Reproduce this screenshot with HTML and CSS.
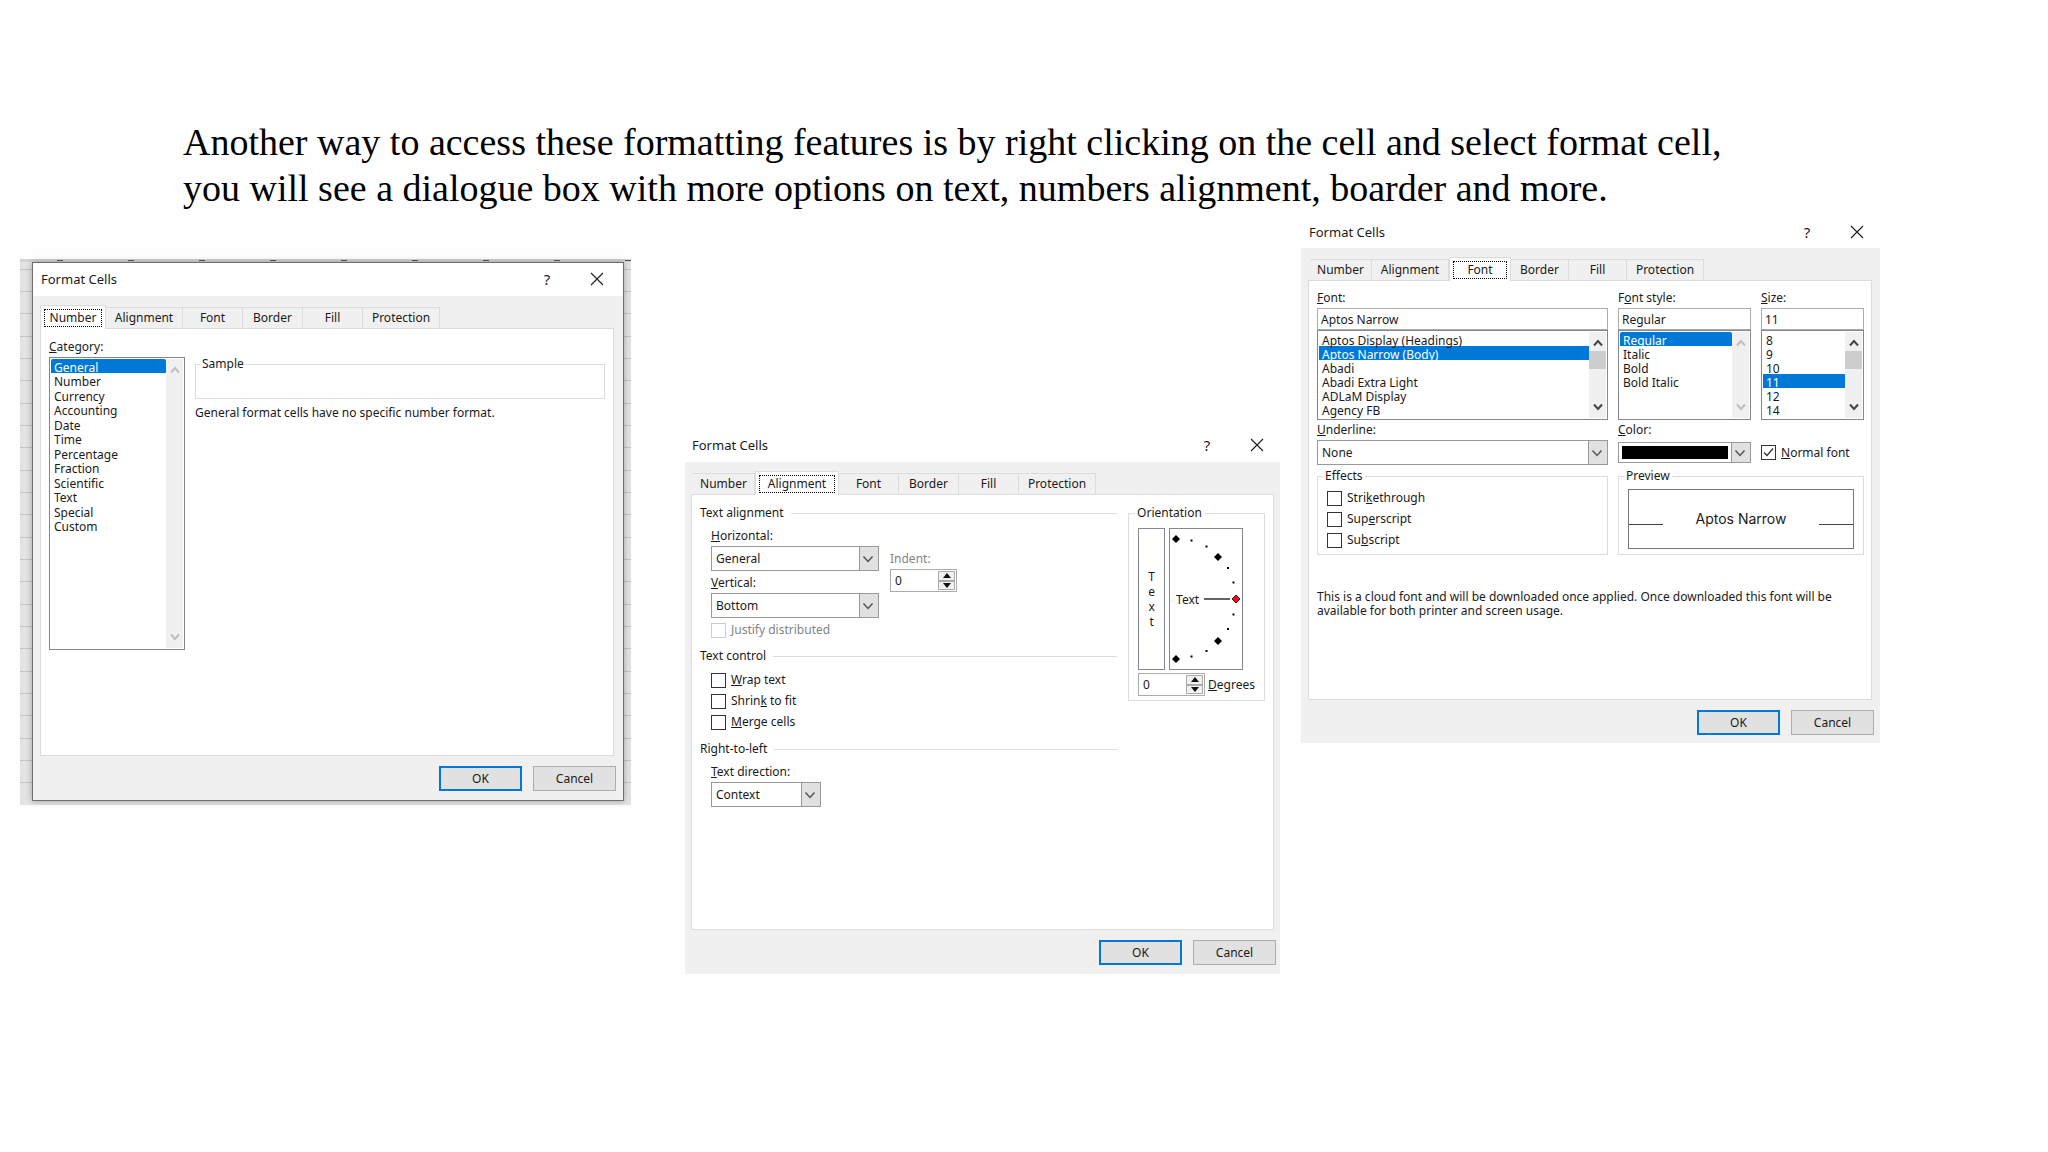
FILE: index.html
```html
<!DOCTYPE html>
<html lang="en">
<head>
    <meta charset="UTF-8">
    <meta name="viewport" content="width=device-width, initial-scale=1.0">
    <title>Format Cells</title>
    <link rel="stylesheet" href="styles.css">
</head>
<body>
    <!-- Shared icons -->
    <svg class="sprite" width="0" height="0" aria-hidden="true">
        <symbol id="close" viewBox="0 0 14 14"><path d="M1 1l12 12M13 1L1 13" fill="none" stroke="#222" stroke-width="1.2"/></symbol>
        <symbol id="down" viewBox="0 0 12 12"><path d="M1.5 3.5L6 8.5l4.5-5" fill="none" stroke="currentColor" stroke-width="1.5"/></symbol>
        <symbol id="arrow-up" viewBox="0 0 10 10"><path d="M1 7.5L5 3l4 4.5" fill="none" stroke="currentColor" stroke-width="2"/></symbol>
        <symbol id="arrow-down" viewBox="0 0 10 10"><path d="M1 2.5L5 7l4-4.5" fill="none" stroke="currentColor" stroke-width="2"/></symbol>
        <symbol id="spin-up" viewBox="0 0 8 5"><path d="M0 5l4-5 4 5z" fill="#111"/></symbol>
        <symbol id="spin-down" viewBox="0 0 8 5"><path d="M0 0h8L4 5z" fill="#111"/></symbol>
    </svg>

    <p class="intro">Another way to access these formatting features is by right clicking on the cell and select format cell,<br>you will see a dialogue box with more options on text, numbers alignment, boarder and more.</p>

    <main class="dialogs">
        <!-- Number tab -->
        <div class="sheet">
            <div class="columns"></div>
            <section class="dialog framed">
                <header class="titlebar">
                    <h2>Format Cells</h2>
                    <button type="button" class="icon-btn help">?</button>
                    <button type="button" class="icon-btn" aria-label="Close"><svg width="14" height="14"><use href="#close"/></svg></button>
                </header>
                <div class="dialog-body">
                    <nav class="tabs">
                        <button type="button" class="tab active"><span>Number</span></button>
                        <button type="button" class="tab wide">Alignment</button>
                        <button type="button" class="tab">Font</button>
                        <button type="button" class="tab">Border</button>
                        <button type="button" class="tab">Fill</button>
                        <button type="button" class="tab wide">Protection</button>
                    </nav>
                    <div class="panel number-panel">
                        <div class="category">
                            <label for="category"><u>C</u>ategory:</label>
                            <div class="listbox">
                                <select id="category" size="12">
                                    <option selected>General</option>
                                    <option>Number</option>
                                    <option>Currency</option>
                                    <option>Accounting</option>
                                    <option>Date</option>
                                    <option>Time</option>
                                    <option>Percentage</option>
                                    <option>Fraction</option>
                                    <option>Scientific</option>
                                    <option>Text</option>
                                    <option>Special</option>
                                    <option>Custom</option>
                                </select>
                                <div class="scroll off">
                                    <svg width="10" height="10"><use href="#arrow-up"/></svg>
                                    <svg width="10" height="10"><use href="#arrow-down"/></svg>
                                </div>
                            </div>
                        </div>
                        <div class="sample">
                            <fieldset class="group sample-box">
                                <legend>Sample</legend>
                            </fieldset>
                            <p>General format cells have no specific number format.</p>
                        </div>
                    </div>
                    <footer class="actions">
                        <button type="button" class="btn primary">OK</button>
                        <button type="button" class="btn">Cancel</button>
                    </footer>
                </div>
            </section>
        </div>

        <!-- Alignment tab -->
        <section class="dialog alignment-dialog">
            <header class="titlebar">
                <h2>Format Cells</h2>
                <button type="button" class="icon-btn help">?</button>
                <button type="button" class="icon-btn" aria-label="Close"><svg width="14" height="14"><use href="#close"/></svg></button>
            </header>
            <div class="dialog-body">
                <nav class="tabs">
                    <button type="button" class="tab">Number</button>
                    <button type="button" class="tab wide active"><span>Alignment</span></button>
                    <button type="button" class="tab">Font</button>
                    <button type="button" class="tab">Border</button>
                    <button type="button" class="tab">Fill</button>
                    <button type="button" class="tab wide">Protection</button>
                </nav>
                <div class="panel alignment-panel">
                    <div class="settings">
                        <h3>Text alignment</h3>
                        <div class="align-row">
                            <div class="field-stack">
                                <label for="horizontal"><u>H</u>orizontal:</label>
                                <div class="combo">
                                    <select id="horizontal"><option>General</option></select>
                                    <svg width="12" height="12"><use href="#down"/></svg>
                                </div>
                                <label for="vertical"><u>V</u>ertical:</label>
                                <div class="combo">
                                    <select id="vertical"><option>Bottom</option></select>
                                    <svg width="12" height="12"><use href="#down"/></svg>
                                </div>
                            </div>
                            <div class="indent">
                                <label for="indent">Indent:</label>
                                <div class="spin">
                                    <input type="text" id="indent" value="0">
                                    <div class="spin-btns">
                                        <button type="button" aria-label="Increase indent"><svg width="8" height="5"><use href="#spin-up"/></svg></button>
                                        <button type="button" aria-label="Decrease indent"><svg width="8" height="5"><use href="#spin-down"/></svg></button>
                                    </div>
                                </div>
                            </div>
                        </div>
                        <label class="check disabled"><input type="checkbox" disabled>Justify distributed</label>
                        <h3>Text control</h3>
                        <div class="checks">
                            <label class="check"><input type="checkbox"><span><u>W</u>rap text</span></label>
                            <label class="check"><input type="checkbox"><span>Shrin<u>k</u> to fit</span></label>
                            <label class="check"><input type="checkbox"><span><u>M</u>erge cells</span></label>
                        </div>
                        <h3>Right-to-left</h3>
                        <div class="field-stack">
                            <label for="direction"><u>T</u>ext direction:</label>
                            <div class="combo short">
                                <select id="direction"><option>Context</option></select>
                                <svg width="12" height="12"><use href="#down"/></svg>
                            </div>
                        </div>
                    </div>
                    <fieldset class="group orientation">
                        <legend>Orientation</legend>
                        <div class="dials">
                            <button type="button" class="vertical-text"><span>T</span><span>e</span><span>x</span><span>t</span></button>
                            <div class="dial">
                                <span>Text</span>
                                <svg viewBox="0 0 72 140" width="72" height="140">
                                    <path d="M34 70h26" stroke="#111" stroke-width="1.3"/>
                                    <path d="M6 6l4 4-4 4-4-4zM48 24l4 4-4 4-4-4zM48 108l4 4-4 4-4-4zM6 126l4 4-4 4-4-4z" fill="#000"/>
                                    <path d="M66 66l4 4-4 4-4-4z" fill="#e81123" stroke="#600"/>
                                    <path d="M20.500 10.500h2v2h-2zM35.500 16.500h2v2h-2zM57 38h2v2h-2zM62.500 52.500h2v2h-2zM62.500 84.500h2v2h-2zM57 99h2v2h-2zM35.500 121h2v2h-2zM20.500 126.500h2v2h-2z" fill="#000"/>
                                </svg>
                            </div>
                        </div>
                        <div class="degrees">
                            <div class="spin">
                                <input type="text" id="degrees" value="0">
                                <div class="spin-btns">
                                    <button type="button" aria-label="Increase degrees"><svg width="8" height="5"><use href="#spin-up"/></svg></button>
                                    <button type="button" aria-label="Decrease degrees"><svg width="8" height="5"><use href="#spin-down"/></svg></button>
                                </div>
                            </div>
                            <label for="degrees"><u>D</u>egrees</label>
                        </div>
                    </fieldset>
                </div>
                <footer class="actions">
                    <button type="button" class="btn primary">OK</button>
                    <button type="button" class="btn">Cancel</button>
                </footer>
            </div>
        </section>

        <!-- Font tab -->
        <section class="dialog font-dialog">
            <header class="titlebar">
                <h2>Format Cells</h2>
                <button type="button" class="icon-btn help">?</button>
                <button type="button" class="icon-btn" aria-label="Close"><svg width="14" height="14"><use href="#close"/></svg></button>
            </header>
            <div class="dialog-body">
                <nav class="tabs">
                    <button type="button" class="tab">Number</button>
                    <button type="button" class="tab wide">Alignment</button>
                    <button type="button" class="tab active"><span>Font</span></button>
                    <button type="button" class="tab">Border</button>
                    <button type="button" class="tab">Fill</button>
                    <button type="button" class="tab wide">Protection</button>
                </nav>
                <div class="panel font-panel">
                    <div class="picker">
                        <label for="font"><u>F</u>ont:</label>
                        <input type="text" id="font" value="Aptos Narrow">
                        <div class="listbox">
                            <select size="6" aria-label="Font list">
                                <option>Aptos Display (Headings)</option>
                                <option selected>Aptos Narrow (Body)</option>
                                <option>Abadi</option>
                                <option>Abadi Extra Light</option>
                                <option>ADLaM Display</option>
                                <option>Agency FB</option>
                            </select>
                            <div class="scroll">
                                <svg width="10" height="10"><use href="#arrow-up"/></svg>
                                <div class="thumb"></div>
                                <svg width="10" height="10"><use href="#arrow-down"/></svg>
                            </div>
                        </div>
                    </div>
                    <div class="picker">
                        <label for="style">F<u>o</u>nt style:</label>
                        <input type="text" id="style" value="Regular">
                        <div class="listbox">
                            <select size="6" aria-label="Font style list">
                                <option selected>Regular</option>
                                <option>Italic</option>
                                <option>Bold</option>
                                <option>Bold Italic</option>
                            </select>
                            <div class="scroll off">
                                <svg width="10" height="10"><use href="#arrow-up"/></svg>
                                <svg width="10" height="10"><use href="#arrow-down"/></svg>
                            </div>
                        </div>
                    </div>
                    <div class="picker">
                        <label for="size"><u>S</u>ize:</label>
                        <input type="text" id="size" value="11">
                        <div class="listbox">
                            <select size="6" aria-label="Size list">
                                <option>8</option>
                                <option>9</option>
                                <option>10</option>
                                <option selected>11</option>
                                <option>12</option>
                                <option>14</option>
                            </select>
                            <div class="scroll">
                                <svg width="10" height="10"><use href="#arrow-up"/></svg>
                                <div class="thumb"></div>
                                <svg width="10" height="10"><use href="#arrow-down"/></svg>
                            </div>
                        </div>
                    </div>
                    <div class="field">
                        <label for="underline"><u>U</u>nderline:</label>
                        <div class="combo">
                            <select id="underline"><option>None</option></select>
                            <svg width="12" height="12"><use href="#down"/></svg>
                        </div>
                    </div>
                    <div class="field">
                        <label for="color"><u>C</u>olor:</label>
                        <div class="combo color">
                            <select id="color"><option label=" "></option></select>
                            <svg width="12" height="12"><use href="#down"/></svg>
                        </div>
                    </div>
                    <label class="check normal-font"><input type="checkbox" checked><span><u>N</u>ormal font</span></label>
                    <fieldset class="group effects">
                        <legend>Effects</legend>
                        <label class="check"><input type="checkbox"><span>Stri<u>k</u>ethrough</span></label>
                        <label class="check"><input type="checkbox"><span>Sup<u>e</u>rscript</span></label>
                        <label class="check"><input type="checkbox"><span>Su<u>b</u>script</span></label>
                    </fieldset>
                    <fieldset class="group preview">
                        <legend>Preview</legend>
                        <div class="preview-box">Aptos Narrow</div>
                    </fieldset>
                    <p class="note">This is a cloud font and will be downloaded once applied. Once downloaded this font will be available for both printer and screen usage.</p>
                </div>
                <footer class="actions">
                    <button type="button" class="btn primary">OK</button>
                    <button type="button" class="btn">Cancel</button>
                </footer>
            </div>
        </section>
    </main>
</body>
</html>
```
FILE: styles.css
```css
* {
    box-sizing: border-box;
}
body {
    margin: 0;
    background: #fefefe;
    color: #1a1a1a;
    font-family: "Noto Sans", "Open Sans", sans-serif;
    font-size: 12px;
    line-height: 16px;
}
button, input, select {
    font: inherit;
    color: inherit;
    margin: 0;
}
.sprite {
    position: absolute;
}
.intro {
    margin: 0;
    padding: 119px 160px 0 183px;
    font-family: "Liberation Serif", "Times New Roman", serif;
    font-size: 38px;
    line-height: 46px;
    color: #000;
}
.dialogs {
    display: grid;
    grid-template-columns: minmax(0, 611fr) minmax(0, 670fr) minmax(0, 579fr);
    align-items: start;
    padding: 4px 168px 0 20px;
}

/* Worksheet behind the first dialog */
.sheet {
    margin-top: 44px;
    padding: 0 7px 4px 12px;
    background: repeating-linear-gradient(to bottom, transparent 0, transparent 10px, #c4c4c4 10px, #c4c4c4 11px, transparent 11px, transparent 32px, #c4c4c4 32px, #c4c4c4 33px, transparent 33px, transparent 54px, #c4c4c4 54px, #c4c4c4 55px, transparent 55px, transparent 67px) #e3e3e3;
}
.columns {
    height: 3px;
    margin: 0 -7px 0 -12px;
    background: repeating-linear-gradient(to right, transparent 0, transparent 37px, #555 37px, #555 43px, transparent 43px, transparent 71px) 0 1px / auto 1px no-repeat #d4d4d4;
}

/* Dialog */
.dialog {
    background: #f0f0f0;
}
.framed {
    border: 1px solid #6f6f6f;
    box-shadow: 0 0 6px rgba(0, 0, 0, 0.3);
}
.alignment-dialog {
    margin: 213px 21px 0 54px;
}
.titlebar {
    display: flex;
    align-items: center;
    height: 33px;
    padding: 0 13px 0 8px;
    background: #fff;
}
.framed .titlebar {
    padding: 0 16px 2px 8px;
}
.alignment-dialog .titlebar {
    height: 34px;
    padding-left: 7px;
}
.titlebar h2 {
    flex: 1;
    margin: 0;
    font-size: 13px;
    font-weight: normal;
}
.icon-btn {
    width: 20px;
    margin-left: 30px;
    padding: 0;
    border: none;
    background: none;
    line-height: 0;
}
.help {
    font-size: 15px;
    line-height: 20px;
}
.dialog-body {
    padding: 9px 6px 9px;
}
.framed .dialog-body {
    padding: 9px 9px 9px 7px;
}
.font-dialog .dialog-body {
    padding: 9px 8px 8px 7px;
}

/* Tabs */
.tabs {
    display: flex;
    align-items: flex-end;
    margin-left: 2px;
}
.framed .tabs {
    margin-left: 0;
}
.tab {
    width: 60px;
    height: 21px;
    padding: 0;
    border: 1px solid #dcdcdc;
    border-width: 1px 1px 0 0;
    background: #f0f0f0;
}
.tab:first-child {
    width: 62px;
}
.tab.wide {
    width: 77px;
}
.font-dialog .tab:nth-child(n + 4):not(.wide) {
    width: 58px;
}
.tab.active {
    width: 62px;
    height: 24px;
    padding: 3px;
    margin-bottom: -1px;
    border-width: 1px 1px 0;
    background: #fff;
    z-index: 1;
}
.tab.active:first-child {
    width: 66px;
}
.tab.wide.active {
    width: 84px;
}
.tab.active span {
    display: block;
    border: 1px dotted #000;
    line-height: 16px;
}
.panel {
    border: 1px solid #dcdcdc;
    background: #fff;
}

/* Buttons */
.actions {
    display: flex;
    justify-content: flex-end;
    gap: 11px;
    margin-right: -2px;
    padding-top: 10px;
}
.btn {
    width: 83px;
    height: 25px;
    padding: 0;
    border: 1px solid #adadad;
    background: #e1e1e1;
}
.primary {
    border: 2px solid #0078d7;
}

/* List boxes */
.listbox {
    display: flex;
    border: 1px solid #828790;
    padding: 1px;
    background: #fff;
}
.listbox select {
    flex: 1;
    min-width: 0;
    border: none;
    padding: 0;
    background: #fff;
    outline: none;
    overflow: hidden;
    appearance: none;
}
.listbox option {
    height: 14px;
    min-height: 0;
    padding: 0 3px;
    line-height: 14px;
}
.category option:nth-child(even) {
    height: 15px;
}
.listbox option:checked {
    background: linear-gradient(#0078d7, #0078d7);
    -webkit-text-fill-color: #fff;
}
.scroll {
    display: flex;
    flex-direction: column;
    align-items: center;
    width: 17px;
    padding: 6px 0;
    background: #f0f0f0;
    color: #444;
}
.scroll svg:last-child {
    margin-top: auto;
}
.scroll.off {
    color: #bfbfbf;
}
.thumb {
    width: 17px;
    height: 18px;
    margin-top: 3px;
    background: #cdcdcd;
}

/* Combo boxes */
.combo {
    display: grid;
    grid-template-columns: 1fr 20px;
    align-items: center;
    height: 25px;
    border: 1px solid #999;
    background: linear-gradient(to left, #e1e1e1 18px, #999 18px, #999 19px, #fff 19px);
    color: #555;
}
.combo select {
    grid-area: 1 / 1 / 2 / 3;
    width: 100%;
    height: 100%;
    padding: 0 20px 0 4px;
    border: none;
    background: none;
    color: #1a1a1a;
    appearance: none;
}
.combo svg {
    grid-area: 1 / 2;
    justify-self: center;
    pointer-events: none;
}

/* Spin boxes */
.spin {
    display: flex;
    width: 67px;
    height: 23px;
    padding: 1px;
    border: 1px solid #ababab;
    background: #fff;
}
.spin input {
    flex: 1;
    min-width: 0;
    padding: 0 3px;
    border: none;
    color: #1a1a1a;
}
.spin-btns {
    display: flex;
    flex-direction: column;
    width: 17px;
}
.spin-btns button {
    flex: 1;
    display: flex;
    align-items: center;
    justify-content: center;
    min-height: 0;
    padding: 0;
    border: 1px solid #ababab;
    background: #f0f0f0;
}

/* Check boxes */
.check {
    display: flex;
    align-items: center;
    gap: 5px;
}
.check input {
    flex: none;
    width: 15px;
    height: 15px;
    border: 1px solid #333;
    background: #fff;
    appearance: none;
}
.check input:checked {
    background: url("data:image/svg+xml,%3Csvg xmlns='http://www.w3.org/2000/svg' viewBox='0 0 13 13'%3E%3Cpath d='M2 6.500l3 3 6-7' fill='none' stroke='%23333' stroke-width='1.3'/%3E%3C/svg%3E") #fff;
}
.disabled, .indent {
    color: #838383;
}
.disabled input {
    border-color: #ccc;
}

/* Group boxes */
.group {
    min-width: 0;
    margin: 0;
    padding: 0;
    border: 1px solid #dcdcdc;
}
.group legend {
    margin-left: 4px;
    padding: 0 2px;
}

/* Number panel */
.number-panel {
    display: flex;
    gap: 10px;
    min-height: 428px;
    padding: 10px 8px 0;
}
.category {
    width: 136px;
}
.category .listbox {
    height: 293px;
    margin-top: 2px;
}
.sample {
    flex: 1;
    padding-top: 17px;
}
.sample-box {
    height: 43px;
}
.sample p {
    margin: 6px 0;
}

/* Alignment panel */
.alignment-panel {
    display: flex;
    gap: 11px;
    align-items: flex-start;
    min-height: 436px;
    padding: 10px 8px 0;
}
.settings {
    flex: 1;
}
.settings h3 {
    display: flex;
    align-items: center;
    gap: 7px;
    margin: 0;
    font-size: 12px;
    font-weight: normal;
}
.settings h3::after {
    content: "";
    flex: 1;
    border-top: 1px solid #dcdcdc;
}
.align-row {
    display: flex;
    gap: 11px;
    align-items: center;
}
.field-stack {
    padding: 7px 0 0 11px;
}
.field-stack label {
    display: block;
    margin-bottom: 2px;
}
.field-stack .combo {
    width: 168px;
    margin-bottom: 4px;
}
.field-stack .short {
    width: 110px;
}
.indent label {
    display: block;
    margin-bottom: 2px;
}
.settings > .check {
    margin: 0 0 10px 11px;
}
.checks {
    display: grid;
    gap: 5px;
    padding: 8px 0 11px 11px;
}
.orientation {
    padding: 0 9px 4px;
}
.orientation legend {
    margin-left: -3px;
}
.dials {
    display: flex;
    gap: 4px;
    margin-top: 7px;
}
.vertical-text {
    display: flex;
    flex-direction: column;
    justify-content: center;
    align-items: center;
    width: 27px;
    padding: 0;
    border: 1px solid #828790;
    background: #fff;
    line-height: 15px;
}
.dial {
    display: grid;
    align-items: center;
    border: 1px solid #828790;
}
.dial span, .dial svg {
    grid-area: 1 / 1;
}
.dial span {
    padding: 2px 0 0 6px;
}
.degrees {
    display: flex;
    align-items: center;
    gap: 3px;
    margin-top: 3px;
}

/* Font panel */
.font-panel {
    display: grid;
    grid-template-columns: 291fr 133fr 103fr;
    column-gap: 10px;
    align-content: start;
    min-height: 420px;
    padding: 9px 7px 0 8px;
}
.picker label, .field label {
    display: block;
    margin-bottom: 2px;
}
.picker input {
    display: block;
    width: 100%;
    height: 22px;
    padding: 0 3px;
    border: 1px solid #ababab;
}
.picker .listbox {
    height: 90px;
}
.field {
    padding-top: 2px;
}
.color {
    height: 21px;
    margin-top: 4px;
}
.color select {
    width: auto;
    height: 13px;
    margin: 0 22px 0 3px;
    padding: 0;
    background: #000;
}
.normal-font {
    margin-top: 20px;
}
.effects {
    padding: 6px 9px 4px;
    margin-top: 3px;
}
.effects .check {
    margin-bottom: 5px;
}
.effects .check:last-child {
    margin: 0;
}
.effects legend, .preview legend {
    margin-left: -4px;
}
.preview {
    grid-column: 2 / 4;
    margin-top: 3px;
    padding: 5px 9px;
}
.preview-box {
    display: flex;
    align-items: center;
    justify-content: space-between;
    height: 60px;
    border: 1px solid #777;
    font-family: Inter, sans-serif;
    font-size: 14px;
}
.preview-box::before, .preview-box::after {
    content: "";
    width: 34px;
    margin-top: 11px;
    border-top: 1px solid #444;
}
.note {
    grid-column: 1 / 4;
    margin: 35px 0 0;
    line-height: 14px;
}
```
